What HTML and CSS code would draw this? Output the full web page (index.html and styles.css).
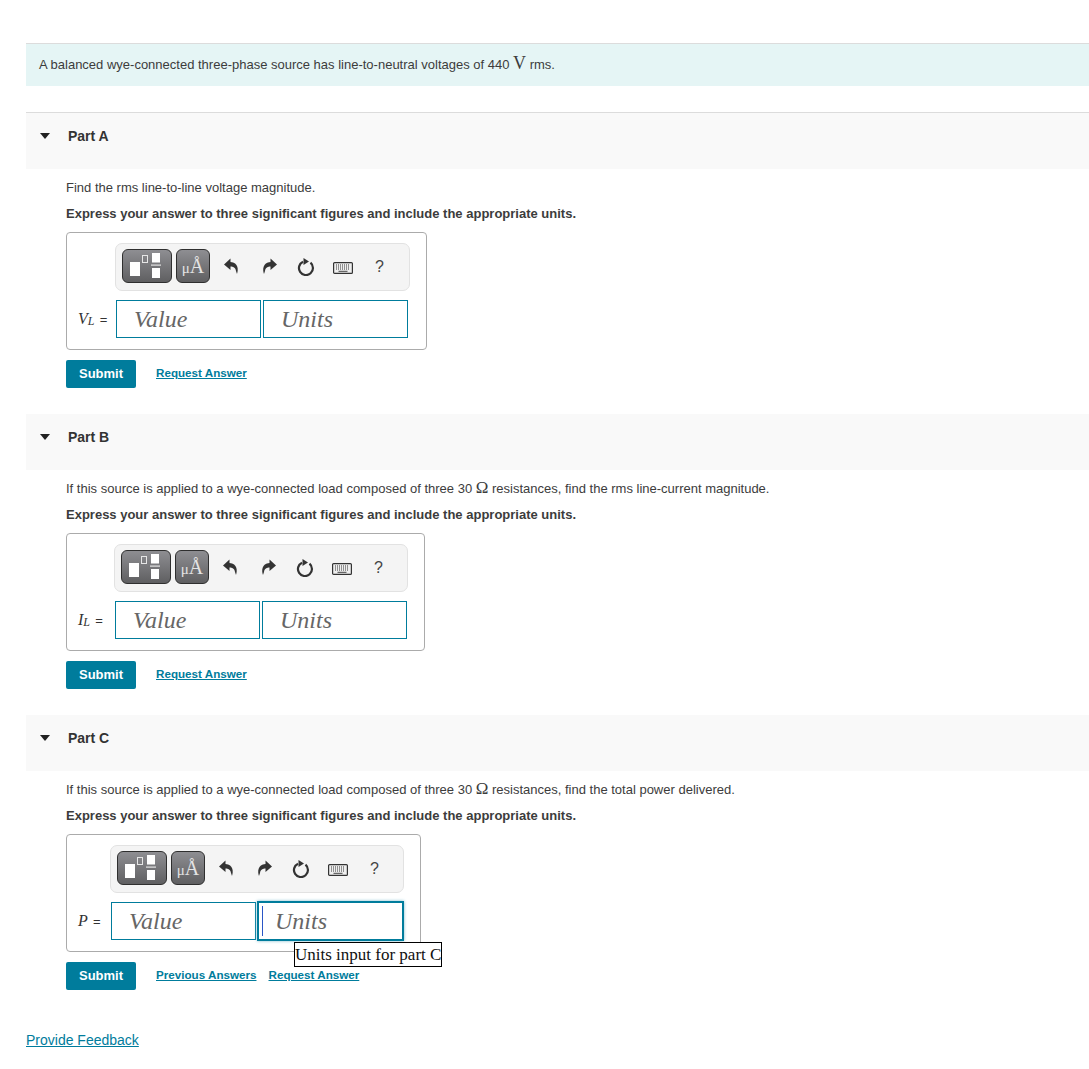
FILE: index.html
```html
<!DOCTYPE html>
<html lang="en">
<head>
<meta charset="utf-8">
<title>Three-phase source</title>
<link rel="stylesheet" href="styles.css">
</head>
<body>
<svg class="defs" width="0" height="0" aria-hidden="true">
  <symbol id="i-undo" viewBox="0 0 16 16"><path d="M7.500 .5 1 6.500 7.500 12V8.500C10 8.500 12.500 9.500 13 13L14 16C15.500 12 15.500 4.500 7.500 4Z"/></symbol>
  <symbol id="i-redo" viewBox="0 0 16 16"><path d="M8.500 .5 15 6.500 8.500 12V8.500C6 8.500 3.500 9.500 3 13L2 16C.5 12 .5 4.500 8.500 4Z"/></symbol>
  <symbol id="i-reset" viewBox="0 0 18 18"><path class="ring" d="M13.500 4.700A7 7 0 1 1 6 3.700"/><path d="M6.500 0 12 3.500 6.500 7Z"/></symbol>
  <symbol id="i-keys" viewBox="0 0 20 12"><rect class="kb" x=".6" y=".6" width="18.800" height="10.800" rx="1"/><path class="kk" d="M3 3h14M3 5h14M3 7h14"/><path class="kl" d="M5.500 9.300h9"/></symbol>
  <symbol id="i-tpl" viewBox="0 0 50 34"><rect x="8" y="13" width="10" height="14" fill="#fff"/><rect class="sup" x="20.500" y="6.500" width="5" height="7"/><rect x="30" y="4" width="8" height="9.500" fill="#fff"/><rect x="29" y="15.500" width="10" height="1.200" fill="#e4e4e4"/><rect x="30" y="19" width="8" height="10" fill="#fff"/></symbol>
</svg>

<main class="page">
  <section class="intro">A balanced wye-connected three-phase source has line-to-neutral voltages of 440 <span class="math unit">V</span> rms.</section>

  <section class="part part-first">
    <header class="part-head"><span class="caret"></span><h2>Part A</h2></header>
    <div class="part-body">
      <p class="prompt">Find the rms line-to-line voltage magnitude.</p>
      <p class="instr">Express your answer to three significant figures and include the appropriate units.</p>
      <div class="answer answer-a">
        <div class="label label-a"><i>V<sub>L</sub></i> <span class="eq">=</span></div>
        <div class="editor">
          <div class="toolbar toolbar-a">
            <button class="tool tpl" type="button" aria-label="Templates"><svg width="50" height="34"><use href="#i-tpl"/></svg></button>
            <button class="tool mu" type="button">μ<span class="ang">Å</span></button>
            <svg class="ic undo" width="16" height="16"><use href="#i-undo"/></svg>
            <svg class="ic redo" width="16" height="16"><use href="#i-redo"/></svg>
            <svg class="ic reset" width="18" height="18"><use href="#i-reset"/></svg>
            <svg class="ic keys" width="20" height="12"><use href="#i-keys"/></svg>
            <span class="help">?</span>
          </div>
          <div class="fields"><div class="field">Value</div><div class="field">Units</div></div>
        </div>
      </div>
      <div class="actions"><button class="submit" type="button">Submit</button><a class="act" href="#">Request Answer</a></div>
    </div>
  </section>

  <section class="part">
    <header class="part-head"><span class="caret"></span><h2>Part B</h2></header>
    <div class="part-body">
      <p class="prompt">If this source is applied to a wye-connected load composed of three 30 <span class="math omega">Ω</span> resistances, find the rms line-current magnitude.</p>
      <p class="instr">Express your answer to three significant figures and include the appropriate units.</p>
      <div class="answer">
        <div class="label label-b"><i>I<sub>L</sub></i> <span class="eq">=</span></div>
        <div class="editor">
          <div class="toolbar">
            <button class="tool tpl" type="button" aria-label="Templates"><svg width="50" height="34"><use href="#i-tpl"/></svg></button>
            <button class="tool mu" type="button">μ<span class="ang">Å</span></button>
            <svg class="ic undo" width="16" height="16"><use href="#i-undo"/></svg>
            <svg class="ic redo" width="16" height="16"><use href="#i-redo"/></svg>
            <svg class="ic reset" width="18" height="18"><use href="#i-reset"/></svg>
            <svg class="ic keys" width="20" height="12"><use href="#i-keys"/></svg>
            <span class="help">?</span>
          </div>
          <div class="fields"><div class="field">Value</div><div class="field">Units</div></div>
        </div>
      </div>
      <div class="actions"><button class="submit" type="button">Submit</button><a class="act" href="#">Request Answer</a></div>
    </div>
  </section>

  <section class="part">
    <header class="part-head"><span class="caret"></span><h2>Part C</h2></header>
    <div class="part-body">
      <p class="prompt">If this source is applied to a wye-connected load composed of three 30 <span class="math omega">Ω</span> resistances, find the total power delivered.</p>
      <p class="instr">Express your answer to three significant figures and include the appropriate units.</p>
      <div class="answer">
        <div class="label label-c"><i>P</i> <span class="eq">=</span></div>
        <div class="editor">
          <div class="toolbar">
            <button class="tool tpl" type="button" aria-label="Templates"><svg width="50" height="34"><use href="#i-tpl"/></svg></button>
            <button class="tool mu" type="button">μ<span class="ang">Å</span></button>
            <svg class="ic undo" width="16" height="16"><use href="#i-undo"/></svg>
            <svg class="ic redo" width="16" height="16"><use href="#i-redo"/></svg>
            <svg class="ic reset" width="18" height="18"><use href="#i-reset"/></svg>
            <svg class="ic keys" width="20" height="12"><use href="#i-keys"/></svg>
            <span class="help">?</span>
          </div>
          <div class="fields">
            <div class="field">Value</div>
            <div class="field focused"><span class="cursor"></span>Units<span class="tip">Units input for part C</span></div>
          </div>
        </div>
      </div>
      <div class="actions"><button class="submit" type="button">Submit</button><a class="act" href="#">Previous Answers</a><a class="act" href="#">Request Answer</a></div>
    </div>
  </section>

  <a class="feedback" href="#">Provide Feedback</a>
</main>
</body>
</html>
```
FILE: styles.css
```css
* { box-sizing: border-box; }
html, body { margin: 0; padding: 0; background: #fff; }
body { font-family: "Liberation Sans", Arial, sans-serif; font-size: 13px; color: #3c3c3c; }
.defs { position: absolute; }
.page { padding: 43px 0 0 26px; height: 1069px; overflow: hidden; }

.intro { height: 43px; background: #e5f5f5; border-top: 1px solid #dcdcdc; padding: 0 13px; line-height: 41px; font-size: 13px; }
.math { font-family: "Liberation Serif", "Times New Roman", serif; line-height: 0; }
.unit { font-size: 18px; }
.omega { font-size: 17px; }

.part { height: 301px; }
.part-first { margin-top: 26px; }
.part-head { height: 57px; background: #f9f9f9; background-clip: padding-box; border-top: 1px solid transparent; display: flex; align-items: center; padding: 0 0 10px 14px; }
.part-first .part-head { border-top-color: #dcdcdc; background-clip: border-box; }
.caret { width: 0; height: 0; border-left: 5px solid transparent; border-right: 5px solid transparent; border-top: 6px solid #222; }
.part-head h2 { margin: 0 0 0 18px; font-size: 14px; line-height: 16px; font-weight: bold; color: #333; }

.part-body { padding: 9px 0 0 40px; }
.prompt { margin: 0; line-height: 20px; height: 20px; white-space: nowrap; }
.instr { margin: 6px 0 0; line-height: 20px; height: 20px; font-size: 13px; font-weight: bold; white-space: nowrap; }

.answer { display: inline-flex; vertical-align: top; margin-top: 8px; padding: 10px 17px 11px 11px; border: 1px solid #ababab; border-radius: 4px; height: 118px; align-items: flex-end; }
.answer-a { padding-right: 18px; }
.label { height: 38px; line-height: 37px; font-family: "Liberation Serif", serif; white-space: nowrap; color: #333; }
.label i { font-size: 16px; }
.label sub { font-size: 12px; vertical-align: -1px; line-height: 0; }
.eq { margin-left: 2px; font-family: "Liberation Sans", sans-serif; font-size: 13px; }
.label-a { width: 38px; }
.label-b { width: 37px; }
.label-c { width: 33px; }

.editor { display: flex; flex-direction: column; gap: 9px; width: 292px; }
.toolbar { width: 294px; height: 48px; margin-left: -1px; background: #f4f4f4; border: 1px solid #e2e2e2; border-radius: 7px; display: flex; align-items: center; padding-left: 6px; }
.toolbar-a { width: 295px; }
.tool { padding: 0; margin: 0 0 2px; height: 34px; border: 1px solid #2f2f2f; border-radius: 6px; background: linear-gradient(#8e8e92, #5f5f61); color: #e4e4e4; display: block; }
.tool svg { display: block; margin: -1px; }
.tpl { width: 50px; }
.mu { width: 34px; margin-left: 4px; font-family: "Liberation Serif", serif; font-size: 15px; line-height: 33px; }
.ang { font-size: 20px; }
.sup { fill: none; stroke: #e6e6e6; stroke-width: 1; }
.ic { fill: #333; flex: none; }
.ring { fill: none; stroke: #333; stroke-width: 2.200; }
.kb { fill: #efefef; stroke: #333; stroke-width: 1.200; }
.kk { fill: none; stroke: #333; stroke-width: 1; stroke-dasharray: 1 1; }
.kl { fill: none; stroke: #444; stroke-width: 1; }
.undo { margin: 0 0 2px 13px; }
.redo { margin: 0 0 2px 23px; }
.reset { margin-left: 19px; }
.keys { margin: 2px 0 0 18px; }
.help { margin-left: 22px; font-size: 16px; color: #444; }

.fields { display: flex; gap: 2px; }
.field { position: relative; width: 145px; height: 38px; border: 1px solid #007c9c; background: #fff; padding-left: 17px; font-family: "Liberation Serif", serif; font-style: italic; font-size: 24px; line-height: 37px; color: #666; }
.focused { padding-left: 16px; box-shadow: 0 0 3px 1px #7fbccc; outline: 1px solid #007c9c; }
.cursor { position: absolute; left: 3px; top: 3px; height: 30px; width: 1px; background: #2a56c6; }
.tip { position: absolute; left: 35px; top: 39px; z-index: 2; height: 25px; line-height: 23px; border: 1px solid #000; background: #fff; color: #111; font-style: normal; font-size: 17px; white-space: nowrap; }

.actions { display: flex; align-items: flex-start; margin-top: 10px; }
.submit { width: 70px; height: 28px; padding: 0 0 1px; background: #007c9c; border: 0; border-radius: 2px; color: #fff; font-family: "Liberation Sans", sans-serif; font-size: 13px; font-weight: bold; }
.act { margin: 5px 0 0 12px; color: #007c9c; font-size: 11.650px; font-weight: bold; line-height: 15px; }
.submit + .act { margin-left: 20px; }
.feedback { display: inline-block; margin-top: 16px; color: #007c9c; font-size: 14px; line-height: 18px; }
```
